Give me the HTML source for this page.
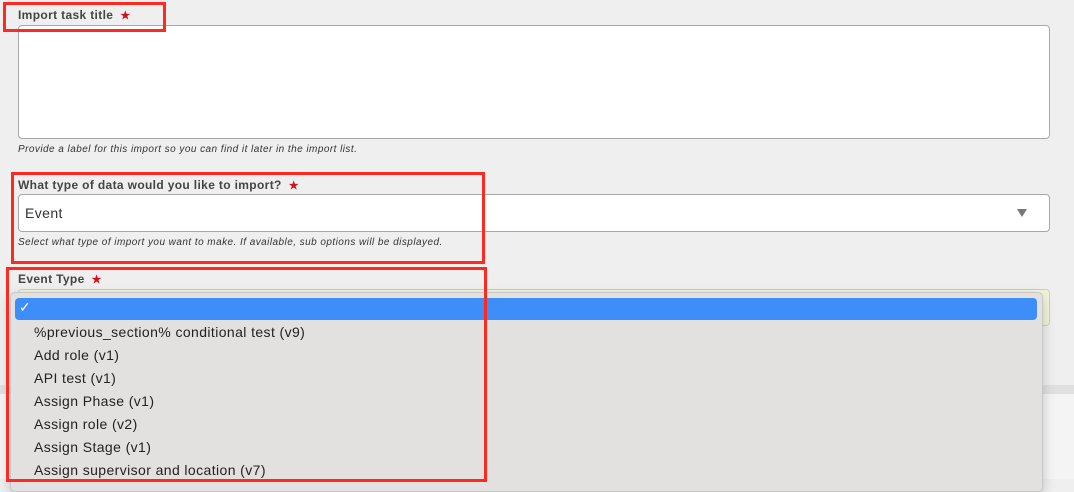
<!DOCTYPE html>
<html><head><meta charset="utf-8"><style>
*{box-sizing:border-box;margin:0;padding:0}
body{width:1074px;height:479px;overflow:hidden;background:#efefef;font-family:"Liberation Sans",sans-serif;position:relative;color:#3c3c3c}
.a{position:absolute}
.lbl{font-size:12px;font-weight:bold;color:#444;letter-spacing:0.35px}
.star{color:#d0101a;font-size:11px;margin-left:7px}
.help{font-size:10px;font-style:italic;color:#333;letter-spacing:0.45px}
.rb{position:absolute;border:3px solid #ff2a1f}
.it{position:absolute;left:34px;font-size:14px;color:#222;letter-spacing:0.4px}
</style></head><body>
<div class="a lbl" style="left:18px;top:8px">Import task title<span class="star">★</span></div>
<div class="a" style="left:18px;top:25px;width:1032px;height:114px;background:#fff;border:1px solid #a8a8a8;border-radius:4px"></div>
<div class="a help" style="left:18px;top:144px">Provide a label for this import so you can find it later in the import list.</div>
<div class="a lbl" style="left:18px;top:178px">What type of data would you like to import?<span class="star">★</span></div>
<div class="a" style="left:18px;top:194px;width:1032px;height:38px;background:#fff;border:1px solid #a8a8a8;border-radius:4px"></div>
<div class="a" style="left:25px;top:205px;font-size:14px;color:#333;letter-spacing:0.4px">Event</div>
<div class="a" style="left:1017px;top:209px;width:0;height:0;border-left:5px solid transparent;border-right:5px solid transparent;border-top:8px solid #777"></div>
<div class="a help" style="left:18px;top:237px">Select what type of import you want to make. If available, sub options will be displayed.</div>
<div class="a lbl" style="left:18px;top:272px">Event Type<span class="star">★</span></div>
<div class="a" style="left:18px;top:289px;width:1032px;height:37px;background:#f2f5d8;border:1px solid #cfd3a8;border-radius:4px"></div>
<div class="a" style="left:0;top:385px;width:1074px;height:9px;background:#e0e0e0"></div>
<div class="a" style="left:0;top:394px;width:1074px;height:85px;background:#f4f4f4"></div>
<div class="a" style="left:10px;top:292px;width:1033px;height:200px;background:#e2e1df;border:1px solid #c8c8c8;border-radius:5px;box-shadow:0 4px 12px rgba(0,0,0,.2)"></div>
<div class="a" style="left:15px;top:298px;width:1022px;height:22px;background:#3d8ef8;border-radius:4px"></div>
<div class="a" style="left:19px;top:299px;color:#fff;font-size:14px">✓</div>
<div class="it" style="top:324px">%previous_section% conditional test (v9)</div>
<div class="it" style="top:347px">Add role (v1)</div>
<div class="it" style="top:370px">API test (v1)</div>
<div class="it" style="top:393px">Assign Phase (v1)</div>
<div class="it" style="top:416px">Assign role (v2)</div>
<div class="it" style="top:439px">Assign Stage (v1)</div>
<div class="it" style="top:462px">Assign supervisor and location (v7)</div>
<div class="rb" style="left:3px;top:2px;width:163px;height:30px"></div>
<div class="rb" style="left:11px;top:172px;width:474px;height:92px"></div>
<div class="rb" style="left:6px;top:267px;width:481px;height:215px"></div>
</body></html>
